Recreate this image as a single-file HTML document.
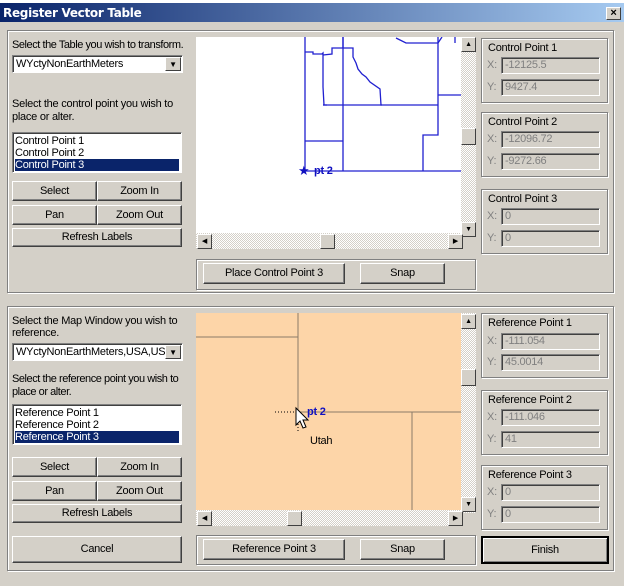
<!DOCTYPE html>
<html><head><meta charset="utf-8"><style>
*{box-sizing:border-box;margin:0;padding:0}
body{width:631px;height:586px;background:#fff;position:relative;overflow:hidden;font-family:"Liberation Sans",sans-serif;font-size:11px;letter-spacing:-0.25px;color:#000}
.a{position:absolute}
.win{left:0;top:3px;width:624px;height:583px;background:#d4d0c8}
.title{left:0;top:3px;width:624px;height:19px;background:linear-gradient(90deg,#0a246a,#a6caf0);color:#fff;font-weight:bold;font-size:12px;padding:3px 0 0 3px;font-family:"DejaVu Sans","Liberation Sans",sans-serif;letter-spacing:-0.3px}
.close{left:606px;top:7px;width:15px;height:13px;background:#d4d0c8;border:1px solid;border-color:#fff #404040 #404040 #fff;font-size:11px;font-weight:bold;text-align:center;line-height:10px;color:#000}
.grp{border:1px solid #808080;box-shadow:1px 1px 0 #fff,inset 1px 1px 0 #fff}
.btn{background:#d4d0c8;border:1px solid;border-color:#fff #404040 #404040 #fff;box-shadow:inset -1px -1px 0 #808080;text-align:center}
.fld{border:1px solid;border-color:#808080 #fff #fff #808080;box-shadow:inset 1px 1px 0 #404040;background:#d4d0c8;color:#808080;padding:1px 0 0 3px;height:17px;width:99px}
.wfld{border:1px solid;border-color:#808080 #fff #fff #808080;box-shadow:inset 1px 1px 0 #404040;background:#fff}
.sb{background:repeating-conic-gradient(#d4d0c8 0 25%,#fff 0 50%) 0 0/2px 2px}
.arr{background:#d4d0c8;border:1px solid;border-color:#fff #404040 #404040 #fff;width:15px;height:15px;font-size:7px;text-align:center;line-height:13px}
.sel{background:#0a246a;color:#fff}
</style></head><body>
<div class="a win"></div>
<div class="a title">Register Vector Table</div>
<div class="a close">×</div>

<!-- top panel -->
<div class="a grp" style="left:7px;top:30px;width:607px;height:263px"></div>
<div class="a" style="left:12px;top:39px;letter-spacing:-0.45px">Select the Table you wish to transform.</div>
<div class="a wfld" style="left:12px;top:55px;width:171px;height:18px;padding:2px 3px">WYctyNonEarthMeters</div>
<div class="a arr" style="left:165px;top:57px;width:16px;height:14px;font-size:8px">▼</div>
<div class="a" style="left:12px;top:98px;line-height:13px">Select the control point you wish to<br>place or alter.</div>
<div class="a wfld" style="left:12px;top:132px;width:170px;height:41px;padding:2px;line-height:12px">
<div>Control Point 1</div><div>Control Point 2</div><div class="sel">Control Point 3</div></div>
<div class="a btn" style="left:12px;top:181px;width:85px;height:20px;line-height:18px">Select</div>
<div class="a btn" style="left:97px;top:181px;width:85px;height:20px;line-height:18px">Zoom In</div>
<div class="a btn" style="left:12px;top:205px;width:85px;height:20px;line-height:18px">Pan</div>
<div class="a btn" style="left:97px;top:205px;width:85px;height:20px;line-height:18px">Zoom Out</div>
<div class="a btn" style="left:12px;top:228px;width:170px;height:19px;line-height:17px">Refresh Labels</div>

<svg class="a" style="left:196px;top:37px" width="280" height="213">
<rect width="265" height="198" fill="#fff"/>
<g stroke="#2020d0" stroke-width="1.3" fill="none">
<polyline points="109,0 109,134 265,134"/>
<polyline points="109,15 117,15 117,17 126,17 127,16 127,50 128,68 131,68 127,68"/>
<polyline points="127,18 136,17 136,11 147,11 147,0"/>
<polyline points="147,0 147,134"/>
<polyline points="109,104 147,104"/>
<polyline points="147,11 157,11 157,20 160,26 162,32 166,37 170,40 174,45 184,52 185,68 186,68"/>
<polyline points="127,68 242,68"/>
<polyline points="242,0 242,98 227,98 227,134"/>
<polyline points="242,58 265,58"/>
<polyline points="200,1 210,6 215,6 242,6 246,0"/>
<polyline points="259,0 259,6"/>
</g>
<text x="102" y="138" fill="#1010c0" font-size="13">★</text>
<text x="118" y="137" fill="#1010c0" font-weight="bold" font-size="11" font-family="Liberation Sans">pt 2</text>
</svg>
<div class="a sb" style="left:461px;top:37px;width:15px;height:200px"></div>
<div class="a arr" style="left:461px;top:37px">▲</div>
<div class="a arr" style="left:461px;top:128px;height:17px"></div>
<div class="a arr" style="left:461px;top:222px">▼</div>
<div class="a sb" style="left:196px;top:233px;width:265px;height:16px"></div>
<div class="a arr" style="left:197px;top:234px">◀</div>
<div class="a arr" style="left:320px;top:234px"></div>
<div class="a arr" style="left:448px;top:234px">▶</div>

<div class="a grp" style="left:196px;top:259px;width:280px;height:31px"></div>
<div class="a btn" style="left:203px;top:263px;width:142px;height:21px;line-height:19px">Place Control Point 3</div>
<div class="a btn" style="left:360px;top:263px;width:85px;height:21px;line-height:19px">Snap</div>

<div class="a grp" style="left:481px;top:38px;width:127px;height:65px"></div>
<div class="a" style="left:488px;top:42px">Control Point 1</div>
<div class="a" style="left:487px;top:59px;color:#808080">X:</div><div class="a fld" style="left:501px;top:57px">-12125.5</div>
<div class="a" style="left:487px;top:81px;color:#808080">Y:</div><div class="a fld" style="left:501px;top:79px">9427.4</div>
<div class="a grp" style="left:481px;top:112px;width:127px;height:65px"></div>
<div class="a" style="left:488px;top:116px">Control Point 2</div>
<div class="a" style="left:487px;top:133px;color:#808080">X:</div><div class="a fld" style="left:501px;top:131px">-12096.72</div>
<div class="a" style="left:487px;top:155px;color:#808080">Y:</div><div class="a fld" style="left:501px;top:153px">-9272.66</div>
<div class="a grp" style="left:481px;top:189px;width:127px;height:65px"></div>
<div class="a" style="left:488px;top:193px">Control Point 3</div>
<div class="a" style="left:487px;top:210px;color:#808080">X:</div><div class="a fld" style="left:501px;top:208px">0</div>
<div class="a" style="left:487px;top:232px;color:#808080">Y:</div><div class="a fld" style="left:501px;top:230px">0</div>

<!-- bottom panel -->
<div class="a grp" style="left:7px;top:306px;width:607px;height:265px"></div>
<div class="a" style="left:12px;top:315px;line-height:12px">Select the Map Window you wish to<br>reference.</div>
<div class="a wfld" style="left:12px;top:343px;width:171px;height:18px;padding:2px 3px;overflow:hidden;white-space:nowrap">WYctyNonEarthMeters,USA,USA</div>
<div class="a arr" style="left:165px;top:345px;width:16px;height:14px;font-size:8px">▼</div>
<div class="a" style="left:12px;top:373px;line-height:13px;letter-spacing:-0.45px">Select the reference point you wish to<br>place or alter.</div>
<div class="a wfld" style="left:12px;top:404px;width:170px;height:41px;padding:2px;line-height:12px">
<div>Reference Point 1</div><div>Reference Point 2</div><div class="sel">Reference Point 3</div></div>
<div class="a btn" style="left:12px;top:457px;width:85px;height:20px;line-height:18px">Select</div>
<div class="a btn" style="left:97px;top:457px;width:85px;height:20px;line-height:18px">Zoom In</div>
<div class="a btn" style="left:12px;top:481px;width:85px;height:20px;line-height:18px">Pan</div>
<div class="a btn" style="left:97px;top:481px;width:85px;height:20px;line-height:18px">Zoom Out</div>
<div class="a btn" style="left:12px;top:504px;width:170px;height:19px;line-height:17px">Refresh Labels</div>
<div class="a btn" style="left:12px;top:536px;width:170px;height:27px;line-height:25px">Cancel</div>

<svg class="a" style="left:196px;top:313px" width="280" height="213">
<rect width="265" height="198" fill="#fdd5a8"/>
<g stroke="#8a7a68" stroke-width="1" fill="none">
<polyline points="102,0 102,97"/>
<polyline points="0,24 102,24"/>
<polyline points="102,99 265,99"/>
<polyline points="216,99 216,198"/>
<polyline points="79,99 100,99" stroke="#000" stroke-dasharray="1,2"/>
<polyline points="102,99 102,118" stroke="#000" stroke-dasharray="1,2"/>
</g>
<text x="111" y="102" fill="#1010c0" font-weight="bold" font-size="11" font-family="Liberation Sans">pt 2</text>
<path d="M100,95 L100,112 L104,108 L107,115 L110,114 L107,107 L112,107 Z" fill="#fff" stroke="#000" stroke-width="1"/>
<text x="114" y="131" fill="#000" font-size="11" font-family="Liberation Sans">Utah</text>
</svg>
<div class="a sb" style="left:461px;top:313px;width:15px;height:200px"></div>
<div class="a arr" style="left:461px;top:314px">▲</div>
<div class="a arr" style="left:461px;top:369px;height:17px"></div>
<div class="a arr" style="left:461px;top:497px">▼</div>
<div class="a sb" style="left:196px;top:510px;width:265px;height:16px"></div>
<div class="a arr" style="left:197px;top:511px">◀</div>
<div class="a arr" style="left:287px;top:511px"></div>
<div class="a arr" style="left:448px;top:511px">▶</div>

<div class="a grp" style="left:196px;top:535px;width:280px;height:30px"></div>
<div class="a btn" style="left:203px;top:539px;width:142px;height:21px;line-height:19px">Reference Point 3</div>
<div class="a btn" style="left:360px;top:539px;width:85px;height:21px;line-height:19px">Snap</div>
<div class="a btn" style="left:481px;top:536px;width:128px;height:28px;line-height:24px;border:2px solid #000;box-shadow:inset 1px 1px 0 #fff,inset -1px -1px 0 #808080">Finish</div>

<div class="a grp" style="left:481px;top:313px;width:127px;height:65px"></div>
<div class="a" style="left:488px;top:317px">Reference Point 1</div>
<div class="a" style="left:487px;top:335px;color:#808080">X:</div><div class="a fld" style="left:501px;top:333px">-111.054</div>
<div class="a" style="left:487px;top:356px;color:#808080">Y:</div><div class="a fld" style="left:501px;top:354px">45.0014</div>
<div class="a grp" style="left:481px;top:390px;width:127px;height:65px"></div>
<div class="a" style="left:488px;top:394px">Reference Point 2</div>
<div class="a" style="left:487px;top:411px;color:#808080">X:</div><div class="a fld" style="left:501px;top:409px">-111.046</div>
<div class="a" style="left:487px;top:433px;color:#808080">Y:</div><div class="a fld" style="left:501px;top:431px">41</div>
<div class="a grp" style="left:481px;top:465px;width:127px;height:65px"></div>
<div class="a" style="left:488px;top:469px">Reference Point 3</div>
<div class="a" style="left:487px;top:486px;color:#808080">X:</div><div class="a fld" style="left:501px;top:484px">0</div>
<div class="a" style="left:487px;top:508px;color:#808080">Y:</div><div class="a fld" style="left:501px;top:506px">0</div>
</body></html>
